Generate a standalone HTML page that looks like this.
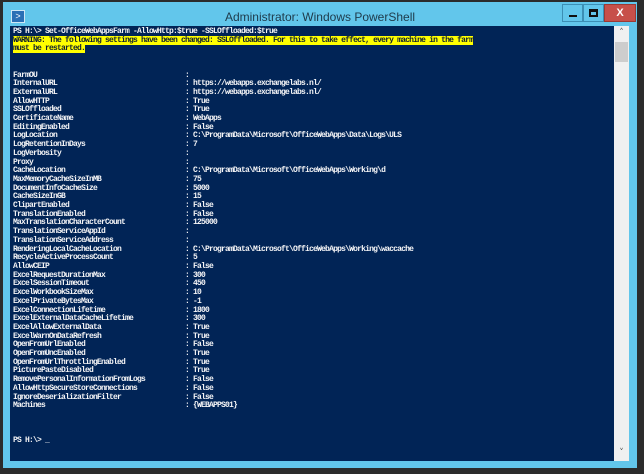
<!DOCTYPE html>
<html><head><meta charset="utf-8"><style>
html,body{margin:0;padding:0;width:644px;height:474px;overflow:hidden;background:#3a3a3a;}
.win{position:absolute;left:3px;top:2px;width:634px;height:466px;background:#62c6eb;}
.shadow{position:absolute;left:0;top:0;width:644px;height:474px;background:#2b2b2b;}
.title{position:absolute;left:0;top:8px;width:634px;text-align:center;font:12px "Liberation Sans",sans-serif;color:#1e3a4a;}
.icon{position:absolute;left:8px;top:8px;width:14px;height:13px;background:#2a6fb5;border:1px solid #cfe7f5;box-sizing:border-box;color:#fff;font:9px "Liberation Sans";text-align:center;line-height:11px;}
.btn{position:absolute;top:2px;height:18px;box-sizing:border-box;border:1px solid #3c8fb5;background:#62c6eb;}
.con{position:absolute;left:7px;top:24px;width:604px;height:435px;background:#012456;overflow:hidden;}
.sb{position:absolute;left:611px;top:24px;width:15px;height:435px;background:#f0f0f0;}
pre{margin:0;position:absolute;left:3px;top:2px;font:bold 8px/8.7px "Liberation Mono",monospace;letter-spacing:-0.8px;color:#f4f4f6;}
.w{background:#ffff00;color:#102030;}
</style></head><body>
<div class="shadow"></div>
<div class="win">
<div class="icon">&gt;</div>
<div class="title">Administrator: Windows PowerShell</div>
<div class="btn" style="left:559px;width:21px;"><div style="position:absolute;left:6px;top:10px;width:8px;height:2px;background:#111"></div></div>
<div class="btn" style="left:580px;width:21px;"><div style="position:absolute;left:5px;top:4px;width:9px;height:8px;border:2px solid #111;border-top-width:3px;box-sizing:border-box"></div></div>
<div class="btn" style="left:601px;width:32px;background:#c7504a;border-color:#9c3a34;color:#fff;font:bold 11px 'Liberation Sans';text-align:center;line-height:16px">X</div>
<div class="con"><pre>PS H:\&gt; Set-OfficeWebAppsFarm -AllowHttp:$true -SSLOffloaded:$true
<span class="w">WARNING: The following settings have been changed: SSLOffloaded. For this to take effect, every machine in the farm</span>
<span class="w">must be restarted.</span>


FarmOU                                     :
InternalURL                                : https://webapps.exchangelabs.nl/
ExternalURL                                : https://webapps.exchangelabs.nl/
AllowHTTP                                  : True
SSLOffloaded                               : True
CertificateName                            : WebApps
EditingEnabled                             : False
LogLocation                                : C:\ProgramData\Microsoft\OfficeWebApps\Data\Logs\ULS
LogRetentionInDays                         : 7
LogVerbosity                               :
Proxy                                      :
CacheLocation                              : C:\ProgramData\Microsoft\OfficeWebApps\Working\d
MaxMemoryCacheSizeInMB                     : 75
DocumentInfoCacheSize                      : 5000
CacheSizeInGB                              : 15
ClipartEnabled                             : False
TranslationEnabled                         : False
MaxTranslationCharacterCount               : 125000
TranslationServiceAppId                    :
TranslationServiceAddress                  :
RenderingLocalCacheLocation                : C:\ProgramData\Microsoft\OfficeWebApps\Working\waccache
RecycleActiveProcessCount                  : 5
AllowCEIP                                  : False
ExcelRequestDurationMax                    : 300
ExcelSessionTimeout                        : 450
ExcelWorkbookSizeMax                       : 10
ExcelPrivateBytesMax                       : -1
ExcelConnectionLifetime                    : 1800
ExcelExternalDataCacheLifetime             : 300
ExcelAllowExternalData                     : True
ExcelWarnOnDataRefresh                     : True
OpenFromUrlEnabled                         : False
OpenFromUncEnabled                         : True
OpenFromUrlThrottlingEnabled               : True
PicturePasteDisabled                       : True
RemovePersonalInformationFromLogs          : False
AllowHttpSecureStoreConnections            : False
IgnoreDeserializationFilter                : False
Machines                                   : {WEBAPPS01}



PS H:\&gt; _</pre></div>
<div class="sb">
<div style="position:absolute;left:0;top:0;width:15px;height:15px;text-align:center;font:9px 'DejaVu Sans';color:#555;line-height:15px">&#x2C4;</div>
<div style="position:absolute;left:1px;top:16px;width:13px;height:20px;background:#cdcdcd"></div>
<div style="position:absolute;left:0;bottom:0;width:15px;height:15px;text-align:center;font:9px 'DejaVu Sans';color:#555;line-height:15px">&#x2C5;</div>
</div>
</div>
</body></html>
